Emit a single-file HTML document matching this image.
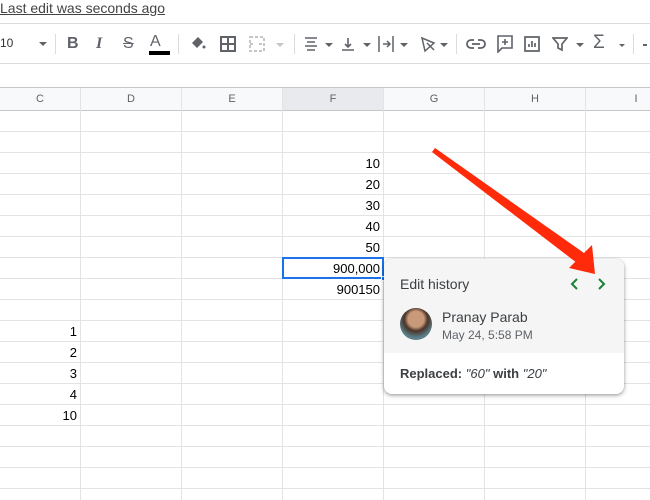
<!DOCTYPE html>
<html><head><style>
*{margin:0;padding:0;box-sizing:border-box}
body{width:650px;height:500px;overflow:hidden;background:#fff;font-family:"Liberation Sans",Arial,sans-serif;position:relative;color:#444}
.a{position:absolute}
.tb{font-size:16px;color:#5f6368;font-weight:bold}
.caret{position:absolute;width:0;height:0;border-left:4px solid transparent;border-right:4px solid transparent;border-top:4px solid #5f6368}
.sep{position:absolute;top:34px;width:1px;height:20px;background:#dadce0}
.hl{position:absolute;left:0;width:650px;height:1px;background:#e2e3e3}
.vl{position:absolute;top:88px;width:1px;height:412px;background:#e2e3e3}
.ch{position:absolute;top:88px;height:23px;line-height:23px;text-align:center;font-size:11px;color:#5f6368}
.num{position:absolute;font-size:13px;color:#000;text-align:right;height:21px;line-height:21px}
</style></head><body>
<div class="a" style="left:0;top:0;font-size:14px;color:#444;text-decoration:underline;line-height:16px">Last edit was seconds ago</div>
<div class="a" style="left:0;top:23px;width:650px;height:1px;background:#dadce0"></div>
<div class="a" style="left:0;top:63px;width:650px;height:1px;background:#dadce0"></div>
<div class="a" style="left:0;top:36px;font-size:12px;color:#333">10</div>
<div class="caret" style="left:39px;top:42px"></div>
<div class="sep" style="left:55px"></div>
<div class="a tb" style="left:67px;top:35px">B</div>
<div class="a tb" style="left:96px;top:35px;font-style:italic;font-family:'Liberation Serif',serif">I</div>
<div class="a tb" style="left:123px;top:35px;text-decoration:line-through;font-weight:normal">S</div>
<div class="a" style="left:150px;top:33px;font-size:16px;color:#5f6368">A</div>
<div class="a" style="left:149px;top:51px;width:21px;height:4px;background:#000"></div>
<div class="sep" style="left:178px"></div>
<svg class="a" style="left:188px;top:34px" width="20" height="20" viewBox="0 0 20 20"><path d="M4 9l6-6 5 5-6 6z" fill="#5f6368"/><circle cx="16" cy="13" r="1.5" fill="#5f6368"/></svg>
<svg class="a" style="left:219px;top:35px" width="18" height="18" viewBox="0 0 18 18"><path d="M2 2h14v14H2zM9 2v14M2 9h14" fill="none" stroke="#5f6368" stroke-width="2"/></svg>
<svg class="a" style="left:248px;top:35px" width="18" height="18" viewBox="0 0 18 18"><path d="M2 2h14v14H2zM2 9h5M11 9h5" fill="none" stroke="#c4c6c9" stroke-width="2" stroke-dasharray="3 2"/></svg>
<div class="caret" style="left:276px;top:43px;border-top-color:#c4c6c9"></div>
<div class="sep" style="left:294px"></div>
<svg class="a" style="left:303px;top:36px" width="16" height="16" viewBox="0 0 16 16"><path d="M2 2h12M4 6h8M2 10h12M4 14h8" stroke="#5f6368" stroke-width="1.6"/></svg>
<div class="caret" style="left:325px;top:43px"></div>
<svg class="a" style="left:340px;top:36px" width="16" height="16" viewBox="0 0 16 16"><path d="M8 2v9M5 8l3 3 3-3M2 14h12" stroke="#5f6368" stroke-width="1.6" fill="none"/></svg>
<div class="caret" style="left:363px;top:43px"></div>
<svg class="a" style="left:377px;top:35px" width="18" height="18" viewBox="0 0 18 18"><path d="M2 1v16M16 1v16M6 9h7M10 6l3 3-3 3" stroke="#5f6368" stroke-width="1.5" fill="none"/></svg>
<div class="caret" style="left:400px;top:43px"></div>
<svg class="a" style="left:419px;top:35px" width="18" height="18" viewBox="0 0 18 18"><path d="M3 3l12 5-9 8zM8 8l7 7" stroke="#5f6368" stroke-width="1.5" fill="none"/></svg>
<div class="caret" style="left:440px;top:43px"></div>
<div class="sep" style="left:456px"></div>
<svg class="a" style="left:466px;top:36px" width="20" height="16" viewBox="0 0 20 16"><path d="M8 4H5a4 4 0 000 8h3M12 4h3a4 4 0 010 8h-3M6 8h8" stroke="#5f6368" stroke-width="1.8" fill="none"/></svg>
<svg class="a" style="left:497px;top:35px" width="16" height="18" viewBox="0 0 16 18"><path d="M1 1h14v12H5l-4 4zM8 4v6M5 7h6" stroke="#5f6368" stroke-width="1.6" fill="none"/></svg>
<svg class="a" style="left:523px;top:35px" width="18" height="18" viewBox="0 0 18 18"><path d="M2 2h14v14H2zM6 12V9M9 12V6M12 12V8" stroke="#5f6368" stroke-width="1.7" fill="none"/></svg>
<svg class="a" style="left:552px;top:36px" width="16" height="16" viewBox="0 0 16 16"><path d="M1 2h14l-5 6v6l-4-2V8z" fill="none" stroke="#5f6368" stroke-width="1.7"/></svg>
<div class="caret" style="left:576px;top:43px"></div>
<div class="a" style="left:593px;top:32px;font-size:19px;color:#5f6368">Σ</div>
<div class="caret" style="left:619px;top:44px;border-left-width:3px;border-right-width:3px;border-top-width:3px"></div>
<div class="sep" style="left:633px"></div>
<div class="a" style="left:643px;top:44px;width:4px;height:2px;background:#5f6368"></div>
<div class="a" style="left:0;top:88px;width:650px;height:23px;background:#f8f9fa"></div>
<div class="a" style="left:282px;top:88px;width:101px;height:23px;background:#e8eaed"></div>
<div class="hl" style="top:87px;background:#c4c7c5"></div>
<div class="hl" style="top:110px;background:#c4c7c5"></div>
<div class="ch" style="left:0;width:80px">C</div>
<div class="ch" style="left:81px;width:100px">D</div>
<div class="ch" style="left:182px;width:100px">E</div>
<div class="ch" style="left:283px;width:100px">F</div>
<div class="ch" style="left:384px;width:100px">G</div>
<div class="ch" style="left:485px;width:100px">H</div>
<div class="ch" style="left:586px;width:100px">I</div>
<div class="hl" style="top:131px"></div><div class="hl" style="top:152px"></div><div class="hl" style="top:173px"></div><div class="hl" style="top:194px"></div><div class="hl" style="top:215px"></div><div class="hl" style="top:236px"></div><div class="hl" style="top:257px"></div><div class="hl" style="top:278px"></div><div class="hl" style="top:299px"></div><div class="hl" style="top:320px"></div><div class="hl" style="top:341px"></div><div class="hl" style="top:362px"></div><div class="hl" style="top:383px"></div><div class="hl" style="top:404px"></div><div class="hl" style="top:425px"></div><div class="hl" style="top:446px"></div><div class="hl" style="top:467px"></div><div class="hl" style="top:488px"></div>
<div class="vl" style="left:80px"></div><div class="vl" style="left:181px"></div><div class="vl" style="left:282px"></div><div class="vl" style="left:383px"></div><div class="vl" style="left:484px"></div><div class="vl" style="left:585px"></div>
<div class="num" style="left:283px;width:97px;top:153px">10</div>
<div class="num" style="left:283px;width:97px;top:174px">20</div>
<div class="num" style="left:283px;width:97px;top:195px">30</div>
<div class="num" style="left:283px;width:97px;top:216px">40</div>
<div class="num" style="left:283px;width:97px;top:237px">50</div>
<div class="a" style="left:282px;top:257px;width:102px;height:22px;border:2px solid #1a73e8"></div>
<div class="a" style="left:381px;top:276px;width:5px;height:5px;background:#1a73e8;border:1px solid #fff"></div>
<div class="num" style="left:283px;width:97px;top:258px">900,000</div>
<div class="num" style="left:283px;width:97px;top:279px">900150</div>
<div class="num" style="left:0;width:77px;top:321px">1</div>
<div class="num" style="left:0;width:77px;top:342px">2</div>
<div class="num" style="left:0;width:77px;top:363px">3</div>
<div class="num" style="left:0;width:77px;top:384px">4</div>
<div class="num" style="left:0;width:77px;top:405px">10</div>
<div class="a" style="left:384px;top:259px;width:240px;height:135px;border-radius:8px;background:#fff;box-shadow:0 1px 3px rgba(0,0,0,.3),0 2px 6px rgba(0,0,0,.15);overflow:hidden">
 <div style="position:absolute;left:0;top:0;width:240px;height:94px;background:#f5f5f5"></div>
 <div style="position:absolute;left:16px;top:17px;font-size:14px;color:#3c4043">Edit history</div>
 <svg style="position:absolute;left:185px;top:18px" width="10" height="14" viewBox="0 0 10 14"><path d="M8 2L3 7l5 5" stroke="#188038" stroke-width="2" fill="none"/></svg>
 <svg style="position:absolute;left:213px;top:18px" width="10" height="14" viewBox="0 0 10 14"><path d="M2 2l5 5-5 5" stroke="#188038" stroke-width="2" fill="none"/></svg>
 <div style="position:absolute;left:16px;top:49px;width:32px;height:32px;border-radius:50%;background:radial-gradient(circle at 50% 35%,#c99a7a 0 30%,#4a3328 45%,#5a7f8a 70%)"></div>
 <div style="position:absolute;left:58px;top:50px;font-size:14px;color:#3c4043">Pranay Parab</div>
 <div style="position:absolute;left:58px;top:69px;font-size:12px;color:#5f6368">May 24, 5:58 PM</div>
 <div style="position:absolute;left:16px;top:107px;font-size:13px;color:#3c4043"><b>Replaced:</b> <i>"60"</i> <b>with</b> <i>"20"</i></div>
</div>
<svg class="a" style="left:0;top:0" width="650" height="500"><path d="M432 152L435 148L584 253L577 263Z" fill="#ff2a0a"/><path d="M569 268L592 245L595 274Z" fill="#ff2a0a"/></svg>
</body></html>
